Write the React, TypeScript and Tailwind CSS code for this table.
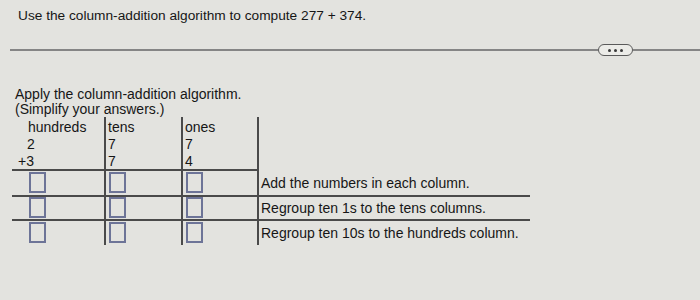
import React from "react";

const Box = ({ mt = "mt-0" }: { mt?: string }) => (
  <div className={`${mt} w-[17px] h-[21px] border-2 border-[#6d7497]`} />
);

const cols = "grid grid-cols-[92px_77px_76px_273px]";
const vl = "border-l-2 border-[#4a4a4a]";
const ht = "border-t-2 border-[#4a4a4a]";

export default function App() {
  return (
    <div
      className="w-[700px] h-[300px] bg-[#e3e3df] text-[#161616] text-[14px] overflow-hidden"
      style={{ fontFamily: '"Liberation Sans", Arial, sans-serif' }}
    >
      <div className="pt-[8px] pl-[18px] leading-[16px] text-[13.7px]">
        Use the column-addition algorithm to compute 277 + 374.
      </div>

      <div className="mt-[20px] pl-[10px] flex items-center h-[12px]">
        <div className="flex-1 h-[2px] bg-[#858585]" />
        <div className="w-[35px] h-[12px] rounded-full border-[1.5px] border-[#5a5a5a] bg-[#ecece8] flex items-center justify-center gap-[3px]">
          <div className="w-[3px] h-[3px] rounded-full bg-[#3a3a3a]" />
          <div className="w-[3px] h-[3px] rounded-full bg-[#3a3a3a]" />
          <div className="w-[3px] h-[3px] rounded-full bg-[#3a3a3a]" />
        </div>
        <div className="w-[67px] h-[2px] bg-[#858585]" />
      </div>

      <div className="mt-[31px] pl-[15px] leading-[15px]">
        <div>Apply the column-addition algorithm.</div>
        <div>(Simplify your answers.)</div>
      </div>

      <div className="ml-[12px]">
        <div className={`${cols} h-[19px] leading-[17px]`}>
          <div className="pt-[2px] pl-[16px]">hundreds</div>
          <div className={`${vl} pt-[2px] pl-[2px]`}>tens</div>
          <div className={`${vl} pt-[2px] pl-[2px]`}>ones</div>
          <div className={vl} />
        </div>
        <div className={`${cols} h-[17px] leading-[17px]`}>
          <div className="pl-[15px]">2</div>
          <div className={`${vl} pl-[2px]`}>7</div>
          <div className={`${vl} pl-[2px]`}>7</div>
          <div className={vl} />
        </div>
        <div className={`${cols} h-[16px] leading-[16px]`}>
          <div className="pl-[6px]">+3</div>
          <div className={`${vl} pl-[2px]`}>7</div>
          <div className={`${vl} pl-[2px]`}>4</div>
          <div className={vl} />
        </div>

        <div className={`${cols} h-[26px]`}>
          <div className={`${ht} pl-[17px]`}>
            <Box mt="mt-[1px]" />
          </div>
          <div className={`${ht} ${vl} pl-[3px]`}>
            <Box mt="mt-[1px]" />
          </div>
          <div className={`${ht} ${vl} pl-[3px]`}>
            <Box mt="mt-[1px]" />
          </div>
          <div className={`${vl} pt-[2px] pl-[2px] leading-[24px]`}>
            Add the numbers in each column.
          </div>
        </div>
        <div className={`${cols} h-[24px]`}>
          <div className={`${ht} pl-[17px]`}>
            <Box />
          </div>
          <div className={`${ht} ${vl} pl-[3px]`}>
            <Box />
          </div>
          <div className={`${ht} ${vl} pl-[3px]`}>
            <Box />
          </div>
          <div className={`${ht} ${vl} pl-[2px] leading-[22px]`}>
            Regroup ten 1s to the tens columns.
          </div>
        </div>
        <div className={`${cols} h-[26px]`}>
          <div className={`${ht} pl-[17px]`}>
            <Box mt="mt-[1px]" />
          </div>
          <div className={`${ht} ${vl} pl-[3px]`}>
            <Box mt="mt-[1px]" />
          </div>
          <div className={`${ht} ${vl} pl-[3px]`}>
            <Box mt="mt-[1px]" />
          </div>
          <div className={`${ht} ${vl} pl-[2px] leading-[24px]`}>
            Regroup ten 10s to the hundreds column.
          </div>
        </div>
      </div>
    </div>
  );
}
